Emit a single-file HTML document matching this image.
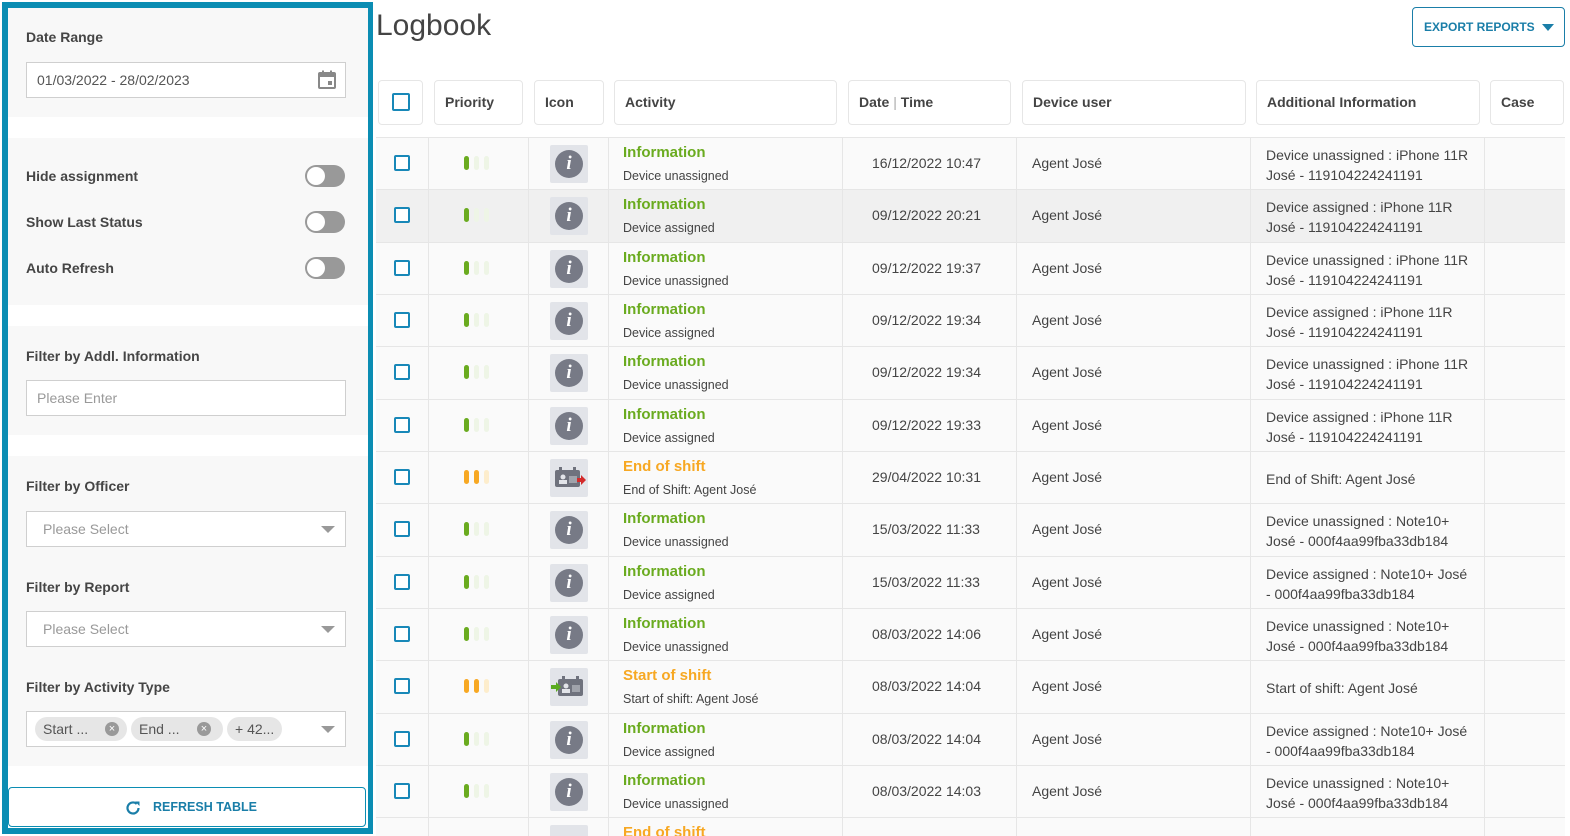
<!DOCTYPE html>
<html><head><meta charset="utf-8"><style>
*{box-sizing:border-box;margin:0;padding:0}
html,body{width:1570px;height:836px;overflow:hidden}
body{background:#fff;font-family:"Liberation Sans",sans-serif;color:#444;position:relative}
.a{position:absolute}
.panel{left:2px;top:2px;width:371px;height:832px;border:6px solid #0b8db3;border-right-width:5px;background:#fff}
.sec{position:absolute;left:0;width:360px;background:#f8f8f8}
.lbl{position:absolute;left:18px;font-weight:bold;font-size:14px;color:#454545}
.inp{position:absolute;left:18px;width:320px;height:36px;border:1px solid #cfcfcf;background:#fff;font-size:14px;color:#555;padding:9px 10px}
.ph{color:#999}
.tog{position:absolute;left:297px;width:40px;height:22px;border-radius:11px;background:#999}
.tog:after{content:"";position:absolute;left:2px;top:2px;width:18px;height:18px;border-radius:50%;background:#fff}
.caret{position:absolute;right:10px;top:14px;width:0;height:0;border-left:7px solid transparent;border-right:7px solid transparent;border-top:7px solid #999}
.chip{position:absolute;top:5px;height:24px;border-radius:12px;background:#e6e6e6;font-size:14px;color:#555;padding:4px 8px;white-space:nowrap}
.x{position:absolute;top:5px;width:14px;height:14px;border-radius:50%;background:#999;color:#fff;font-size:11px;line-height:14px;text-align:center}
.hc{position:absolute;top:80px;height:45px;border:1px solid #e6e6e6;border-radius:4px;font-weight:bold;font-size:14px;color:#444;padding:13px 10px}
.row{position:absolute;left:376px;width:1189px;height:53px;background:#fafafa;border-top:1px solid #e6e6e6;overflow:hidden}
.vl{position:absolute;top:0;bottom:0;width:1px;background:#e6e6e6}
.cb{position:absolute;left:18px;top:17px;width:16px;height:16px;border:2px solid #1888b8;border-radius:2px;background:#fff}
.bar{position:absolute;top:18px;width:5px;height:14px;border-radius:3px}
.g{background:#6aab1f}.gl{background:#eef5e6}.o{background:#f7a823}.ol{background:#fdedcc}
.ic{position:absolute;left:174px;top:7px;width:38px;height:38px;background:#e2e4e9;border-radius:2px}
.ci{position:absolute;left:5px;top:5px;width:28px;height:28px;border-radius:50%;background:#777a86;color:#fff;font:italic bold 19px "Liberation Serif",serif;text-align:center;line-height:28px}
.t1{position:absolute;left:247px;top:6px;font-weight:bold;font-size:15px;color:#6aab1f}
.t1.or{color:#f7a823}
.t2{position:absolute;left:247px;top:31px;font-size:12.5px;color:#444}
.dt{position:absolute;left:496px;top:17px;font-size:14px;color:#444}
.du{position:absolute;left:656px;top:17px;font-size:14px;color:#444}
.ad{position:absolute;left:890px;top:7px;width:205px;font-size:14px;line-height:20px;color:#444}
.ad1{top:17px}
</style></head><body>

<div class="a panel">
 <div class="sec" style="top:0;height:109px">
  <div class="lbl" style="top:21px">Date Range</div>
  <div class="inp" style="top:54px">01/03/2022 - 28/02/2023
   <svg style="position:absolute;right:8px;top:7px" width="20" height="20" viewBox="0 0 20 20"><rect x="2" y="3" width="16" height="15" rx="1" fill="none" stroke="#888" stroke-width="2"/><rect x="2" y="3" width="16" height="4" fill="#888"/><rect x="5" y="0.5" width="2" height="4" fill="#888"/><rect x="13" y="0.5" width="2" height="4" fill="#888"/><rect x="11" y="11" width="4" height="4" fill="#888"/></svg></div>
 </div>
 <div class="sec" style="top:130px;height:167px">
  <div class="lbl" style="top:30px">Hide assignment</div><div class="tog" style="top:27px"></div>
  <div class="lbl" style="top:76px">Show Last Status</div><div class="tog" style="top:73px"></div>
  <div class="lbl" style="top:122px">Auto Refresh</div><div class="tog" style="top:119px"></div>
 </div>
 <div class="sec" style="top:318px;height:109px">
  <div class="lbl" style="top:22px">Filter by Addl. Information</div>
  <div class="inp ph" style="top:54px">Please Enter</div>
 </div>
 <div class="sec" style="top:448px;height:310px">
  <div class="lbl" style="top:22px">Filter by Officer</div>
  <div class="inp ph" style="top:55px;padding-left:16px">Please Select<div class="caret"></div></div>
  <div class="lbl" style="top:123px">Filter by Report</div>
  <div class="inp ph" style="top:155px;padding-left:16px">Please Select<div class="caret"></div></div>
  <div class="lbl" style="top:223px">Filter by Activity Type</div>
  <div class="inp" style="top:255px;padding:0">
   <div class="chip" style="left:8px;width:92px">Start ...<span class="x" style="left:70px">×</span></div>
   <div class="chip" style="left:104px;width:92px">End ...<span class="x" style="left:66px">×</span></div>
   <div class="chip" style="left:200px;width:55px">+ 42...</div>
   <div class="caret"></div>
  </div>
 </div>
 <div style="position:absolute;left:0;top:779px;width:358px;height:40px;border:1px solid #0b8db3;border-radius:4px;background:#fff;text-align:center;font-weight:bold;font-size:12.5px;color:#1a7ea8;padding-top:12px">
  <svg style="position:absolute;left:115px;top:11px" width="18" height="18" viewBox="0 0 18 18"><path d="M14.5 9a5.5 5.5 0 1 1-1.8-4.1" fill="none" stroke="#1a7ea8" stroke-width="2.2"/><path d="M11 2.5h4.5V7z" fill="#1a7ea8"/></svg>
  <span style="margin-left:36px">REFRESH TABLE</span></div>
</div>

<div class="a" style="left:376px;top:9px;font-size:30px;color:#444">Logbook</div>
<div class="a" style="left:1412px;top:7px;width:153px;height:40px;border:1px solid #1a7ea8;border-radius:4px;font-weight:bold;font-size:12px;color:#1a7ea8;padding:12px 0 0 11px;white-space:nowrap">EXPORT REPORTS<span style="position:absolute;right:10px;top:16px;border-left:6px solid transparent;border-right:6px solid transparent;border-top:7px solid #1a7ea8"></span></div>

<div class="hc" style="left:378px;width:45px"><div style="position:absolute;left:13px;top:12px;width:18px;height:18px;border:2px solid #1888b8;border-radius:2px"></div></div>
<div class="hc" style="left:434px;width:89px">Priority</div>
<div class="hc" style="left:534px;width:70px">Icon</div>
<div class="hc" style="left:614px;width:223px">Activity</div>
<div class="hc" style="left:848px;width:163px">Date <span style="font-weight:normal;color:#aaa">|</span> Time</div>
<div class="hc" style="left:1022px;width:224px">Device user</div>
<div class="hc" style="left:1256px;width:224px">Additional Information</div>
<div class="hc" style="left:1490px;width:74px">Case</div>

<div class="row" style="top:137px"><div class="vl" style="left:52px"></div><div class="vl" style="left:152px"></div><div class="vl" style="left:232px"></div><div class="vl" style="left:466px"></div><div class="vl" style="left:640px"></div><div class="vl" style="left:874px"></div><div class="vl" style="left:1108px"></div><div class="cb"></div><div class="bar g" style="left:88px"></div><div class="bar gl" style="left:98px"></div><div class="bar gl" style="left:108px"></div><div class="ic"><div class="ci">i</div></div><div class="t1">Information</div><div class="t2">Device unassigned</div><div class="dt">16/12/2022 10:47</div><div class="du">Agent José</div><div class="ad">Device unassigned : iPhone 11R José - 119104224241191</div></div>
<div class="row" style="top:189px;background:#f0f0f0"><div class="vl" style="left:52px"></div><div class="vl" style="left:152px"></div><div class="vl" style="left:232px"></div><div class="vl" style="left:466px"></div><div class="vl" style="left:640px"></div><div class="vl" style="left:874px"></div><div class="vl" style="left:1108px"></div><div class="cb"></div><div class="bar g" style="left:88px"></div><div class="bar gl" style="left:98px"></div><div class="bar gl" style="left:108px"></div><div class="ic"><div class="ci">i</div></div><div class="t1">Information</div><div class="t2">Device assigned</div><div class="dt">09/12/2022 20:21</div><div class="du">Agent José</div><div class="ad">Device assigned : iPhone 11R José - 119104224241191</div></div>
<div class="row" style="top:242px"><div class="vl" style="left:52px"></div><div class="vl" style="left:152px"></div><div class="vl" style="left:232px"></div><div class="vl" style="left:466px"></div><div class="vl" style="left:640px"></div><div class="vl" style="left:874px"></div><div class="vl" style="left:1108px"></div><div class="cb"></div><div class="bar g" style="left:88px"></div><div class="bar gl" style="left:98px"></div><div class="bar gl" style="left:108px"></div><div class="ic"><div class="ci">i</div></div><div class="t1">Information</div><div class="t2">Device unassigned</div><div class="dt">09/12/2022 19:37</div><div class="du">Agent José</div><div class="ad">Device unassigned : iPhone 11R José - 119104224241191</div></div>
<div class="row" style="top:294px"><div class="vl" style="left:52px"></div><div class="vl" style="left:152px"></div><div class="vl" style="left:232px"></div><div class="vl" style="left:466px"></div><div class="vl" style="left:640px"></div><div class="vl" style="left:874px"></div><div class="vl" style="left:1108px"></div><div class="cb"></div><div class="bar g" style="left:88px"></div><div class="bar gl" style="left:98px"></div><div class="bar gl" style="left:108px"></div><div class="ic"><div class="ci">i</div></div><div class="t1">Information</div><div class="t2">Device assigned</div><div class="dt">09/12/2022 19:34</div><div class="du">Agent José</div><div class="ad">Device assigned : iPhone 11R José - 119104224241191</div></div>
<div class="row" style="top:346px"><div class="vl" style="left:52px"></div><div class="vl" style="left:152px"></div><div class="vl" style="left:232px"></div><div class="vl" style="left:466px"></div><div class="vl" style="left:640px"></div><div class="vl" style="left:874px"></div><div class="vl" style="left:1108px"></div><div class="cb"></div><div class="bar g" style="left:88px"></div><div class="bar gl" style="left:98px"></div><div class="bar gl" style="left:108px"></div><div class="ic"><div class="ci">i</div></div><div class="t1">Information</div><div class="t2">Device unassigned</div><div class="dt">09/12/2022 19:34</div><div class="du">Agent José</div><div class="ad">Device unassigned : iPhone 11R José - 119104224241191</div></div>
<div class="row" style="top:399px"><div class="vl" style="left:52px"></div><div class="vl" style="left:152px"></div><div class="vl" style="left:232px"></div><div class="vl" style="left:466px"></div><div class="vl" style="left:640px"></div><div class="vl" style="left:874px"></div><div class="vl" style="left:1108px"></div><div class="cb"></div><div class="bar g" style="left:88px"></div><div class="bar gl" style="left:98px"></div><div class="bar gl" style="left:108px"></div><div class="ic"><div class="ci">i</div></div><div class="t1">Information</div><div class="t2">Device assigned</div><div class="dt">09/12/2022 19:33</div><div class="du">Agent José</div><div class="ad">Device assigned : iPhone 11R José - 119104224241191</div></div>
<div class="row" style="top:451px"><div class="vl" style="left:52px"></div><div class="vl" style="left:152px"></div><div class="vl" style="left:232px"></div><div class="vl" style="left:466px"></div><div class="vl" style="left:640px"></div><div class="vl" style="left:874px"></div><div class="vl" style="left:1108px"></div><div class="cb"></div><div class="bar o" style="left:88px"></div><div class="bar o" style="left:98px"></div><div class="bar ol" style="left:108px"></div><div class="ic"><svg width="38" height="38" viewBox="0 0 38 38"><rect x="5" y="11" width="25" height="17" rx="2" fill="#6f727d"/><rect x="9" y="8" width="3" height="5" fill="#6f727d"/><rect x="23" y="8" width="3" height="5" fill="#6f727d"/><circle cx="13" cy="18" r="2.5" fill="#e2e4e9"/><rect x="9" y="21" width="8" height="4" fill="#e2e4e9"/><rect x="19" y="17" width="8" height="7" fill="#a0a3ab"/><path d="M27 19h4v-3l5 5-5 5v-3h-4z" fill="#d32a2a"/></svg></div><div class="t1 or">End of shift</div><div class="t2">End of Shift: Agent José</div><div class="dt">29/04/2022 10:31</div><div class="du">Agent José</div><div class="ad ad1">End of Shift: Agent José</div></div>
<div class="row" style="top:503px"><div class="vl" style="left:52px"></div><div class="vl" style="left:152px"></div><div class="vl" style="left:232px"></div><div class="vl" style="left:466px"></div><div class="vl" style="left:640px"></div><div class="vl" style="left:874px"></div><div class="vl" style="left:1108px"></div><div class="cb"></div><div class="bar g" style="left:88px"></div><div class="bar gl" style="left:98px"></div><div class="bar gl" style="left:108px"></div><div class="ic"><div class="ci">i</div></div><div class="t1">Information</div><div class="t2">Device unassigned</div><div class="dt">15/03/2022 11:33</div><div class="du">Agent José</div><div class="ad">Device unassigned : Note10+ José - 000f4aa99fba33db184</div></div>
<div class="row" style="top:556px"><div class="vl" style="left:52px"></div><div class="vl" style="left:152px"></div><div class="vl" style="left:232px"></div><div class="vl" style="left:466px"></div><div class="vl" style="left:640px"></div><div class="vl" style="left:874px"></div><div class="vl" style="left:1108px"></div><div class="cb"></div><div class="bar g" style="left:88px"></div><div class="bar gl" style="left:98px"></div><div class="bar gl" style="left:108px"></div><div class="ic"><div class="ci">i</div></div><div class="t1">Information</div><div class="t2">Device assigned</div><div class="dt">15/03/2022 11:33</div><div class="du">Agent José</div><div class="ad">Device assigned : Note10+ José - 000f4aa99fba33db184</div></div>
<div class="row" style="top:608px"><div class="vl" style="left:52px"></div><div class="vl" style="left:152px"></div><div class="vl" style="left:232px"></div><div class="vl" style="left:466px"></div><div class="vl" style="left:640px"></div><div class="vl" style="left:874px"></div><div class="vl" style="left:1108px"></div><div class="cb"></div><div class="bar g" style="left:88px"></div><div class="bar gl" style="left:98px"></div><div class="bar gl" style="left:108px"></div><div class="ic"><div class="ci">i</div></div><div class="t1">Information</div><div class="t2">Device unassigned</div><div class="dt">08/03/2022 14:06</div><div class="du">Agent José</div><div class="ad">Device unassigned : Note10+ José - 000f4aa99fba33db184</div></div>
<div class="row" style="top:660px"><div class="vl" style="left:52px"></div><div class="vl" style="left:152px"></div><div class="vl" style="left:232px"></div><div class="vl" style="left:466px"></div><div class="vl" style="left:640px"></div><div class="vl" style="left:874px"></div><div class="vl" style="left:1108px"></div><div class="cb"></div><div class="bar o" style="left:88px"></div><div class="bar o" style="left:98px"></div><div class="bar ol" style="left:108px"></div><div class="ic"><svg width="38" height="38" viewBox="0 0 38 38"><rect x="8" y="11" width="25" height="17" rx="2" fill="#6f727d"/><rect x="12" y="8" width="3" height="5" fill="#6f727d"/><rect x="26" y="8" width="3" height="5" fill="#6f727d"/><circle cx="16" cy="18" r="2.5" fill="#e2e4e9"/><rect x="12" y="21" width="8" height="4" fill="#e2e4e9"/><rect x="22" y="17" width="8" height="7" fill="#a0a3ab"/><path d="M1 17h5v-3l5 5-5 5v-3H1z" fill="#5aab1f"/></svg></div><div class="t1 or">Start of shift</div><div class="t2">Start of shift: Agent José</div><div class="dt">08/03/2022 14:04</div><div class="du">Agent José</div><div class="ad ad1">Start of shift: Agent José</div></div>
<div class="row" style="top:713px"><div class="vl" style="left:52px"></div><div class="vl" style="left:152px"></div><div class="vl" style="left:232px"></div><div class="vl" style="left:466px"></div><div class="vl" style="left:640px"></div><div class="vl" style="left:874px"></div><div class="vl" style="left:1108px"></div><div class="cb"></div><div class="bar g" style="left:88px"></div><div class="bar gl" style="left:98px"></div><div class="bar gl" style="left:108px"></div><div class="ic"><div class="ci">i</div></div><div class="t1">Information</div><div class="t2">Device assigned</div><div class="dt">08/03/2022 14:04</div><div class="du">Agent José</div><div class="ad">Device assigned : Note10+ José - 000f4aa99fba33db184</div></div>
<div class="row" style="top:765px"><div class="vl" style="left:52px"></div><div class="vl" style="left:152px"></div><div class="vl" style="left:232px"></div><div class="vl" style="left:466px"></div><div class="vl" style="left:640px"></div><div class="vl" style="left:874px"></div><div class="vl" style="left:1108px"></div><div class="cb"></div><div class="bar g" style="left:88px"></div><div class="bar gl" style="left:98px"></div><div class="bar gl" style="left:108px"></div><div class="ic"><div class="ci">i</div></div><div class="t1">Information</div><div class="t2">Device unassigned</div><div class="dt">08/03/2022 14:03</div><div class="du">Agent José</div><div class="ad">Device unassigned : Note10+ José - 000f4aa99fba33db184</div></div>
<div class="row" style="top:817px;height:19px"><div class="vl" style="left:52px"></div><div class="vl" style="left:152px"></div><div class="vl" style="left:232px"></div><div class="vl" style="left:466px"></div><div class="vl" style="left:640px"></div><div class="vl" style="left:874px"></div><div class="vl" style="left:1108px"></div><div class="ic"></div><div class="t1 or">End of shift</div></div>
</body></html>
